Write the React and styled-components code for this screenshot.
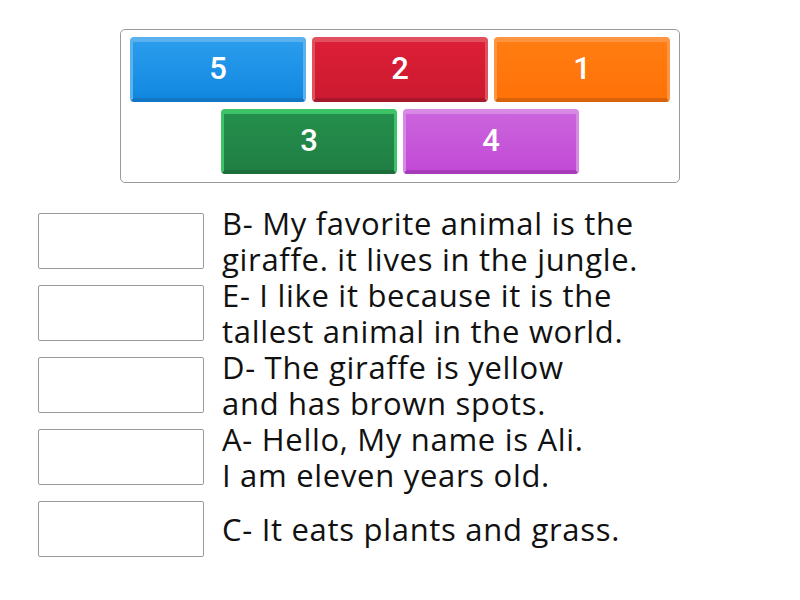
import React from "react";
import styled, { createGlobalStyle } from "styled-components";

const GlobalStyle = createGlobalStyle`
  body {
    margin: 0;
    background: #ffffff;
    font-family: "Open Sans", "Lato", sans-serif;
  }
`;

const Page = styled.div`
  width: 800px;
  height: 600px;
  display: flex;
  flex-direction: column;
  align-items: center;
  padding-top: 29px;
  box-sizing: border-box;
`;

const TilePanel = styled.div`
  width: 560px;
  box-sizing: border-box;
  border: 1px solid #9a9a9a;
  border-radius: 5px;
  padding: 7px 8px 8px 8px;
  display: flex;
  flex-wrap: wrap;
  justify-content: center;
  gap: 7px 6px;
`;

const Tile = styled.div`
  width: 176px;
  height: 65px;
  box-sizing: border-box;
  border-radius: 4px;
  border: 3px solid ${(p) => p.$light};
  border-top-width: 5px;
  border-bottom: 4px solid ${(p) => p.$dark};
  background: linear-gradient(${(p) => p.$top}, ${(p) => p.$bottom});
  display: flex;
  align-items: center;
  justify-content: center;
  padding-bottom: 3px;
  color: #ffffff;
  font-family: "Roboto", "Lato", sans-serif;
  font-size: 31px;
  font-weight: 500;
`;

const List = styled.div`
  width: 800px;
  margin-top: 22px;
  padding-left: 38px;
  box-sizing: border-box;
  display: flex;
  flex-direction: column;
`;

const Row = styled.div`
  height: 72px;
  display: flex;
  align-items: center;
  gap: 18px;
`;

const DropBox = styled.div`
  width: 166px;
  height: 56px;
  box-sizing: border-box;
  border: 1px solid #9a9a9a;
  border-radius: 2px;
  flex-shrink: 0;
`;

const Sentence = styled.div`
  font-size: 31px;
  line-height: 36px;
  letter-spacing: 0.7px;
  color: #111111;
  white-space: pre-line;
`;

const tiles = [
  { n: "5", light: "#5bb0ee", top: "#2a9cec", bottom: "#1188e0", dark: "#1276c4" },
  { n: "2", light: "#e2505f", top: "#dc1f36", bottom: "#cc1a30", dark: "#a8182a" },
  { n: "1", light: "#ff9540", top: "#ff7d12", bottom: "#ff7208", dark: "#d9630a" },
  { n: "3", light: "#3cc466", top: "#248f4c", bottom: "#207f44", dark: "#1b6d3a" },
  { n: "4", light: "#d889e6", top: "#cb64dc", bottom: "#c24ad6", dark: "#a63ab8" },
];

const sentences = [
  "B- My favorite animal is the\ngiraffe. it lives in the jungle.",
  "E- I like it because it is the\ntallest animal in the world.",
  "D- The giraffe is yellow\nand has brown spots.",
  "A- Hello, My name is Ali.\nI am eleven years old.",
  "C- It eats plants and grass.",
];

export default function App() {
  return (
    <>
      <GlobalStyle />
      <Page>
        <TilePanel>
          {tiles.map((t) => (
            <Tile key={t.n} $light={t.light} $top={t.top} $bottom={t.bottom} $dark={t.dark}>
              {t.n}
            </Tile>
          ))}
        </TilePanel>
        <List>
          {sentences.map((s) => (
            <Row key={s}>
              <DropBox />
              <Sentence>{s}</Sentence>
            </Row>
          ))}
        </List>
      </Page>
    </>
  );
}
